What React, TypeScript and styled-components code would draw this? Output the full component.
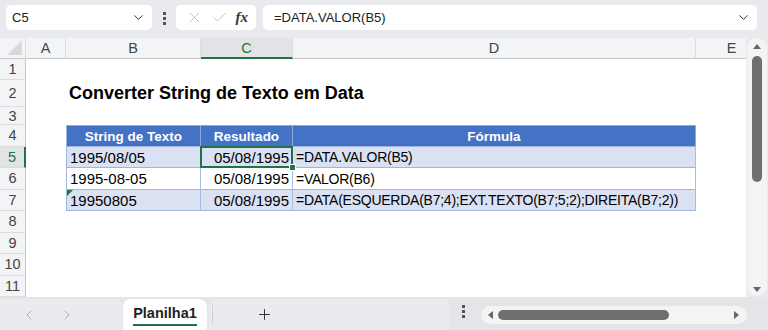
import React from 'react';
import styled, { createGlobalStyle, css } from 'styled-components';
import { Check, ChevronDown, ChevronLeft, ChevronRight, Plus, X } from 'lucide-react';

const GlobalStyle = createGlobalStyle`
  html, body {
    margin: 0;
    padding: 0;
  }
  body {
    width: 768px;
    height: 330px;
    overflow: hidden;
    background: #e8eaed;
    font-family: "Liberation Sans", Arial, sans-serif;
  }
`;

const COLS = '26px 40px 135px 92px 403px 72px';

const Window = styled.div`
  width: 768px;
  height: 330px;
  display: flex;
  flex-direction: column;
  background: #e8eaed;
`;

// formula bar

const FormulaBar = styled.div`
  height: 38px;
  box-sizing: border-box;
  padding: 5px 0 0 6px;
  display: flex;
  align-items: flex-start;
`;

const Box = styled.div<{ $w: number }>`
  width: ${({ $w }) => $w}px;
  height: 25px;
  box-sizing: border-box;
  background: #fff;
  border-radius: 5px;
  display: flex;
  align-items: center;
  padding: 0 6px;
  font-size: 13px;
  color: #222;
`;

const BoxText = styled.span<{ $indent?: number }>`
  flex: 1;
  white-space: nowrap;
  padding-left: ${({ $indent }) => $indent ?? 0}px;
`;

const VDots = styled.div<{ $gap: number }>`
  display: flex;
  flex-direction: column;
  gap: 2px;
  width: ${({ $gap }) => $gap}px;
  align-items: center;
  justify-content: center;
  align-self: stretch;
  padding-bottom: 6px;
  box-sizing: border-box;

  span {
    width: 3px;
    height: 3px;
    background: #555;
  }
`;

const FxGroup = styled(Box)`
  justify-content: space-between;
  padding: 0 8px 0 10px;
  margin-right: 7px;
`;

const Fx = styled.span`
  font-family: "Liberation Serif", "Times New Roman", serif;
  font-style: italic;
  font-weight: bold;
  font-size: 15px;
  color: #333;
`;

// sheet

const Main = styled.div`
  height: 259px;
  display: flex;
`;

const Sheet = styled.div`
  width: 746px;
  overflow: hidden;
  background: #fff;
`;

const Row = styled.div<{ $h: number }>`
  display: grid;
  grid-template-columns: ${COLS};
  height: ${({ $h }) => $h}px;
`;

const ColHead = styled.div<{ $active?: boolean; $first?: boolean }>`
  position: relative;
  display: flex;
  align-items: center;
  justify-content: center;
  box-sizing: border-box;
  background: ${({ $active }) => ($active ? '#e1e3e5' : '#f3f4f5')};
  border-right: 1px solid #dcdde0;
  border-bottom: ${({ $active }) => ($active ? '2px solid #217346' : '1px solid #c4c6c9')};
  color: ${({ $active }) => ($active ? '#217346' : '#444')};
  font-size: 14.5px;
  ${({ $first }) =>
    $first &&
    css`
      &::after {
        content: '';
        position: absolute;
        right: 3px;
        bottom: 3px;
        border-left: 15px solid transparent;
        border-bottom: 15px solid #d8d9db;
      }
    `}
`;

const RowHead = styled.div<{ $active?: boolean }>`
  display: flex;
  align-items: center;
  justify-content: center;
  box-sizing: border-box;
  background: ${({ $active }) => ($active ? '#e1e3e5' : '#f3f4f5')};
  border-right: ${({ $active }) => ($active ? '2px solid #217346' : '1px solid #c4c6c9')};
  border-bottom: 1px solid #dcdde0;
  color: ${({ $active }) => ($active ? '#217346' : '#444')};
  font-size: 14.5px;
`;

const Blank = styled.div``;

const Title = styled.div`
  grid-column: 3 / 6;
  display: flex;
  align-items: flex-end;
  padding: 0 0 3px 3px;
  font-weight: bold;
  font-size: 18px;
  color: #000;
  white-space: nowrap;
`;

type Kind = 'head' | 'band' | 'plain';

const Cell = styled.div<{
  $kind: Kind;
  $align?: 'left' | 'right' | 'center';
  $first?: boolean;
  $flag?: boolean;
  $formula?: boolean;
}>`
  position: relative;
  display: flex;
  align-items: center;
  justify-content: ${({ $align }) =>
    $align === 'right' ? 'flex-end' : $align === 'center' ? 'center' : 'flex-start'};
  padding: 1px 3px 0 3px;
  box-sizing: border-box;
  white-space: nowrap;
  font-size: 15px;
  color: #000;
  background: ${({ $kind }) => ($kind === 'head' ? '#4472c4' : $kind === 'band' ? '#d9e1f2' : '#fff')};
  border-right: 1px solid ${({ $kind }) => ($kind === 'head' ? '#8eaadb' : '#a9bde3')};
  border-bottom: 1px solid #9fb5df;
  ${({ $first }) => $first && css`border-left: 1px solid #9fb5df;`}
  ${({ $formula }) =>
    $formula &&
    css`
      font-size: 14px;
      letter-spacing: -0.25px;
    `}
  ${({ $kind }) =>
    $kind === 'head' &&
    css`
      color: #fff;
      font-weight: bold;
      font-size: 13.5px;
      border-top: 1px solid #8eaadb;
    `}
  ${({ $flag }) =>
    $flag &&
    css`
      &::before {
        content: '';
        position: absolute;
        left: 0;
        top: 0;
        border-top: 6px solid #1e7a3c;
        border-right: 6px solid transparent;
      }
    `}
`;

const Selection = styled.div`
  position: absolute;
  left: -1px;
  top: -1px;
  right: -1px;
  bottom: -1px;
  border: 2px solid #217346;
  z-index: 2;
  pointer-events: none;

  &::after {
    content: '';
    position: absolute;
    right: -5px;
    bottom: -5px;
    width: 5px;
    height: 5px;
    background: #217346;
    border: 1px solid #fff;
  }
`;

const VScroll = styled.div`
  width: 22px;
  display: flex;
  justify-content: center;
  background: #e8eaed;
`;

const VTrack = styled.div`
  width: 20px;
  height: 258px;
  border-radius: 10px;
  background: #f4f4f4;
  display: flex;
  flex-direction: column;
  align-items: center;
  padding: 6px 0 4px;
  box-sizing: border-box;
`;

const Arrow = styled.div<{ $dir: 'up' | 'down' | 'left' | 'right' }>`
  width: 0;
  height: 0;
  ${({ $dir }) =>
    $dir === 'up'
      ? css`border-left: 4.5px solid transparent; border-right: 4.5px solid transparent; border-bottom: 5px solid #666;`
      : $dir === 'down'
      ? css`border-left: 4.5px solid transparent; border-right: 4.5px solid transparent; border-top: 5px solid #666;`
      : $dir === 'left'
      ? css`border-top: 4.5px solid transparent; border-bottom: 4.5px solid transparent; border-right: 5px solid #666;`
      : css`border-top: 4.5px solid transparent; border-bottom: 4.5px solid transparent; border-left: 5px solid #666;`}
`;

const VThumb = styled.div`
  width: 10px;
  height: 126px;
  margin-top: 7px;
  border-radius: 5px;
  background: #6f6f6f;
`;

const Spacer = styled.div`
  flex: 1;
`;

// sheet tabs

const TabBar = styled.div`
  height: 33px;
  display: flex;
  align-items: flex-end;
  background: #e3e5e8;
`;

const NavArea = styled.div`
  width: 122px;
  height: 31px;
  background: #eaebee;
  border-top-right-radius: 8px;
  display: flex;
  align-items: center;
  padding-left: 21px;
  gap: 22px;
  box-sizing: border-box;
  color: #a3a3a3;
`;

const Tab = styled.div`
  width: 84px;
  height: 31px;
  margin-left: 1px;
  background: #fff;
  border-radius: 8px 8px 0 0;
  display: flex;
  flex-direction: column;
  align-items: center;
  justify-content: center;
  font-weight: bold;
  font-size: 14.5px;
  color: #222;
`;

const TabLabel = styled.span`
  padding: 2px 0 3px;
  border-bottom: 2px solid #217346;
`;

const AddArea = styled.div`
  width: 240px;
  height: 31px;
  margin-left: 2px;
  background: #eaebee;
  border-top-left-radius: 8px;
  display: flex;
  align-items: center;
  box-sizing: border-box;
  color: #333;
`;

const Sep = styled.div`
  width: 1px;
  height: 20px;
  background: #cfd1d4;
  margin: 0 43px 0 3px;
`;

const HScrollArea = styled.div`
  flex: 1;
  height: 31px;
  display: flex;
  align-items: center;
`;

const HTrack = styled.div`
  width: 266px;
  height: 18px;
  margin-left: 4px;
  border-radius: 9px;
  background: #f4f4f4;
  display: flex;
  align-items: center;
  padding: 0 8px 0 7px;
  box-sizing: border-box;
`;

const HThumb = styled.div`
  width: 171px;
  height: 10px;
  margin-left: 5px;
  border-radius: 5px;
  background: #6f6f6f;
`;

type RowDef = { n: number; h: number };

const rows: RowDef[] = [
  { n: 1, h: 21 },
  { n: 2, h: 27 },
  { n: 3, h: 18 },
  { n: 4, h: 21.5 },
  { n: 5, h: 21.5 },
  { n: 6, h: 21.5 },
  { n: 7, h: 21.5 },
  { n: 8, h: 21.5 },
  { n: 9, h: 21.5 },
  { n: 10, h: 21.5 },
  { n: 11, h: 21.5 },
];

const data: Record<number, { text: string; result: string; formula: string; band: boolean }> = {
  5: { text: '1995/08/05', result: '05/08/1995', formula: '=DATA.VALOR(B5)', band: true },
  6: { text: '1995-08-05', result: '05/08/1995', formula: '=VALOR(B6)', band: false },
  7: {
    text: '19950805',
    result: '05/08/1995',
    formula: '=DATA(ESQUERDA(B7;4);EXT.TEXTO(B7;5;2);DIREITA(B7;2))',
    band: true,
  },
};

const renderCells = (n: number) => {
  if (n === 2) return <Title>Converter String de Texto em Data</Title>;
  if (n === 4)
    return (
      <>
        <Cell $kind="head" $align="center" $first>String de Texto</Cell>
        <Cell $kind="head" $align="center">Resultado</Cell>
        <Cell $kind="head" $align="center">Fórmula</Cell>
      </>
    );
  const d = data[n];
  if (d) {
    const kind: Kind = d.band ? 'band' : 'plain';
    return (
      <>
        <Cell $kind={kind} $first $flag={n === 7}>{d.text}</Cell>
        <Cell $kind={kind} $align="right">
          {d.result}
          {n === 5 && <Selection />}
        </Cell>
        <Cell $kind={kind} $formula>{d.formula}</Cell>
      </>
    );
  }
  return (
    <>
      <Blank />
      <Blank />
      <Blank />
    </>
  );
};

export default function App() {
  return (
    <Window>
      <GlobalStyle />
      <FormulaBar>
        <Box $w={146}>
          <BoxText>C5</BoxText>
          <ChevronDown size={15} strokeWidth={1.6} color="#333" />
        </Box>
        <VDots $gap={24}>
          <span />
          <span />
          <span />
        </VDots>
        <FxGroup $w={80}>
          <X size={17} strokeWidth={1.2} color="#b5b5b5" />
          <Check size={17} strokeWidth={1.2} color="#b5b5b5" />
          <Fx>fx</Fx>
        </FxGroup>
        <Box $w={494}>
          <BoxText $indent={5}>=DATA.VALOR(B5)</BoxText>
          <ChevronDown size={15} strokeWidth={1.6} color="#333" />
        </Box>
      </FormulaBar>

      <Main>
        <Sheet>
          <Row $h={21}>
            <ColHead $first />
            <ColHead>A</ColHead>
            <ColHead>B</ColHead>
            <ColHead $active>C</ColHead>
            <ColHead>D</ColHead>
            <ColHead>E</ColHead>
          </Row>
          {rows.map((r) => (
            <Row key={r.n} $h={r.h}>
              <RowHead $active={r.n === 5}>{r.n}</RowHead>
              <Blank />
              {renderCells(r.n)}
              <Blank />
            </Row>
          ))}
        </Sheet>
        <VScroll>
          <VTrack>
            <Arrow $dir="up" />
            <VThumb />
            <Spacer />
            <Arrow $dir="down" />
          </VTrack>
        </VScroll>
      </Main>

      <TabBar>
        <NavArea>
          <ChevronLeft size={16} strokeWidth={1.3} />
          <ChevronRight size={16} strokeWidth={1.3} />
        </NavArea>
        <Tab>
          <TabLabel>Planilha1</TabLabel>
        </Tab>
        <AddArea>
          <Sep />
          <Plus size={17} strokeWidth={1.4} />
        </AddArea>
        <HScrollArea>
          <VDots $gap={28}>
            <span />
            <span />
            <span />
          </VDots>
          <HTrack>
            <Arrow $dir="left" />
            <HThumb />
            <Spacer />
            <Arrow $dir="right" />
          </HTrack>
        </HScrollArea>
      </TabBar>
    </Window>
  );
}
